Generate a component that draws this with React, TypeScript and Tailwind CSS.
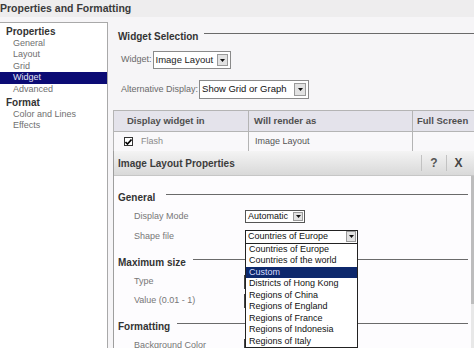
import React from 'react';

function Arrow() {
  return (
    <svg width="5" height="3" viewBox="0 0 5 3">
      <path d="M0 0h5L2.5 3z" fill="#111" />
    </svg>
  );
}

function DropButton({ className }: { className: string }) {
  return (
    <span className={`flex shrink-0 items-center justify-center border border-[#9a9a9a] bg-[#e2e2e2] ${className}`}>
      <Arrow />
    </span>
  );
}

function SectionHeader({ title, gap = 'ml-[7px]' }: { title: string; gap?: string }) {
  return (
    <div className="flex h-[14px] items-center">
      <span className="text-[10px] font-bold text-[#333]">{title}</span>
      <span className={`mb-[6px] h-px flex-1 bg-[#6a6a6a] ${gap}`} />
    </div>
  );
}

const shapes = [
  'Countries of Europe',
  'Countries of the world',
  'Custom',
  'Districts of Hong Kong',
  'Regions of China',
  'Regions of England',
  'Regions of France',
  'Regions of Indonesia',
  'Regions of Italy',
];

export default function App() {
  return (
    <div className="flex h-[348px] w-[474px] flex-col overflow-hidden bg-[#f6f5f7] font-['Liberation_Sans',Arial,sans-serif] text-[9px] text-[#222]">
      <div className="flex h-[17px] shrink-0 items-center bg-[#eeedee] text-[10.5px] font-bold text-[#3a3a3a]">
        Properties and Formatting
      </div>

      <div className="mt-[5px] flex min-h-0 flex-1">
        {/* tree */}
        <aside className="w-[108px] shrink-0 border-t border-r border-[#a9a9a9] bg-white pt-[3px] leading-[11.5px]">
          <div className="pl-[6px] text-[10px] font-bold text-[#333]">Properties</div>
          <div className="pl-[13px] text-[#707070]">General</div>
          <div className="pl-[13px] text-[#707070]">Layout</div>
          <div className="pl-[13px] text-[#707070]">Grid</div>
          <div className="bg-[#0b0b74] pl-[13px] text-[#e4e4f4]">Widget</div>
          <div className="pl-[13px] text-[#707070]">Advanced</div>
          <div className="mt-[2px] pl-[6px] text-[10px] font-bold text-[#333]">Format</div>
          <div className="pl-[13px] text-[#707070]">Color and Lines</div>
          <div className="pl-[13px] text-[#707070]">Effects</div>
        </aside>

        <main className="flex min-w-0 flex-1 flex-col pl-[5px] pt-[7px]">
          <div className="pl-[5px]">
            <SectionHeader title="Widget Selection" gap="ml-[6px]" />
          </div>

          <div className="mt-[8px] flex items-center pl-[8px] text-[#6a6a6a]">
            <span>Widget:</span>
            <div className="ml-[1px] flex h-[18px] w-[78px] items-center border border-[#8a8a8a] bg-white pl-[2px] pr-[2px] text-[9.5px] text-[#222]">
              <span className="flex-1">Image Layout</span>
              <DropButton className="h-[12px] w-[11px]" />
            </div>
          </div>

          <div className="mt-[11px] flex items-center pl-[8px] text-[#6a6a6a]">
            <span>Alternative Display:</span>
            <div className="ml-[1px] flex h-[19px] w-[110px] items-center border border-[#8a8a8a] bg-white pl-[2px] pr-[2px] text-[9.5px] text-[#111]">
              <span className="flex-1">Show Grid or Graph</span>
              <DropButton className="h-[13px] w-[12px]" />
            </div>
          </div>

          {/* table */}
          <div className="mt-[11px] w-[380px] border-t border-l border-[#b4b4b4]">
            <div className="grid h-[21px] grid-cols-[135px_164px_1fr] bg-[#e4e3eb] text-[9.5px] font-bold text-[#4f4f4f]">
              <div className="flex items-center border-r border-b border-[#b4b4b4] pl-[13px]">Display widget in</div>
              <div className="flex items-center border-r border-b border-[#b4b4b4] pl-[5px]">Will render as</div>
              <div className="flex items-center border-b border-[#b4b4b4] pl-[4px]">Full Screen</div>
            </div>
            <div className="grid h-[19px] grid-cols-[135px_164px_1fr] bg-[#f9f8fa]">
              <div className="flex items-center border-r border-[#b4b4b4] pl-[10px]">
                <span className="flex h-[9px] w-[9px] items-center justify-center border border-[#333] bg-white">
                  <svg width="7" height="6" viewBox="0 0 7 6">
                    <path d="M0.5 3l2 2 4-4.5" stroke="#000" strokeWidth="1.6" fill="none" />
                  </svg>
                </span>
                <span className="ml-[8px] text-[#8a8a8a]">Flash</span>
              </div>
              <div className="flex items-center border-r border-[#b4b4b4] pl-[6px] text-[#555]">Image Layout</div>
              <div />
            </div>
          </div>

          {/* dialog */}
          <section className="flex min-h-0 flex-1 flex-col border-l border-[#9e9e9e] bg-[#fdfcfe]">
            <header className="flex h-[25px] shrink-0 items-center border-b border-[#c6c6c6] bg-gradient-to-b from-[#f4f4f4] to-[#d9d9d9]">
              <span className="pl-[4px] text-[10px] font-bold text-[#3c3c3c]">Image Layout Properties</span>
              <div className="ml-auto flex items-center pr-[4px]">
                <span className="h-[16px] w-px bg-[#c2c2c2]" />
                <span className="flex w-[24px] justify-center text-[12px] font-bold text-[#555]">?</span>
                <span className="h-[16px] w-px bg-[#c2c2c2]" />
                <span className="flex w-[23px] justify-center text-[12px] font-bold text-[#444]">X</span>
              </div>
            </header>

            <div className="flex min-h-0 flex-1">
              <div className="flex-1 pl-[4px] pr-[3px] pt-[14px]">
                <SectionHeader title="General" gap="ml-[11px]" />

                <div className="mt-[3px] flex h-[19px] items-center pl-[16px]">
                  <span className="w-[111px] text-[#777]">Display Mode</span>
                  <div className="flex h-[13px] w-[60px] items-center border border-[#555] bg-white pl-[2px] pr-[1px] text-[#111]">
                    <span className="flex-1">Automatic</span>
                    <DropButton className="h-[9px] w-[10px]" />
                  </div>
                </div>

                <div className="mt-[1px] flex h-[19px] items-center pl-[16px]">
                  <span className="w-[111px] text-[#777]">Shape file</span>
                  <div className="relative flex h-[14px] w-[113px] items-center border border-[#222] bg-white pl-[2px] pr-[1px] text-[#111]">
                    <span className="flex-1">Countries of Europe</span>
                    <DropButton className="h-[11px] w-[10px]" />
                    <ul className="absolute left-[-1px] top-full z-10 w-[113px] border border-[#222] bg-white">
                      {shapes.map((s) => (
                        <li
                          key={s}
                          className={`h-[11.5px] pl-[3px] leading-[11.5px] ${
                            s === 'Custom' ? 'bg-[#0d286c] text-[#d6dcff]' : 'text-[#111]'
                          }`}
                        >
                          {s}
                        </li>
                      ))}
                    </ul>
                  </div>
                </div>

                <div className="mt-[9px]">
                  <SectionHeader title="Maximum size" />
                </div>

                <div className="mt-[3px] flex h-[19px] items-center pl-[16px]">
                  <span className="w-[110px] text-[#777]">Type</span>
                  <div className="h-[14px] w-[90px] border border-[#444] bg-white" />
                </div>
                <div className="flex h-[20px] items-center pl-[16px]">
                  <span className="w-[110px] text-[#777]">Value (0.01 - 1)</span>
                  <div className="h-[14px] w-[60px] border border-[#444] bg-white" />
                </div>

                <div className="mt-[8px]">
                  <SectionHeader title="Formatting" />
                </div>
                <div className="mt-[3px] flex h-[19px] items-center pl-[16px]">
                  <span className="w-[110px] text-[#777]">Background Color</span>
                  <div className="h-[14px] w-[40px] border border-[#444] bg-white" />
                </div>
              </div>

              <div className="flex w-[3px] shrink-0 flex-col bg-[#e8e8e8]">
                <div className="h-[128px] bg-[#bdbdbd]" />
              </div>
            </div>
          </section>
        </main>
      </div>
    </div>
  );
}
